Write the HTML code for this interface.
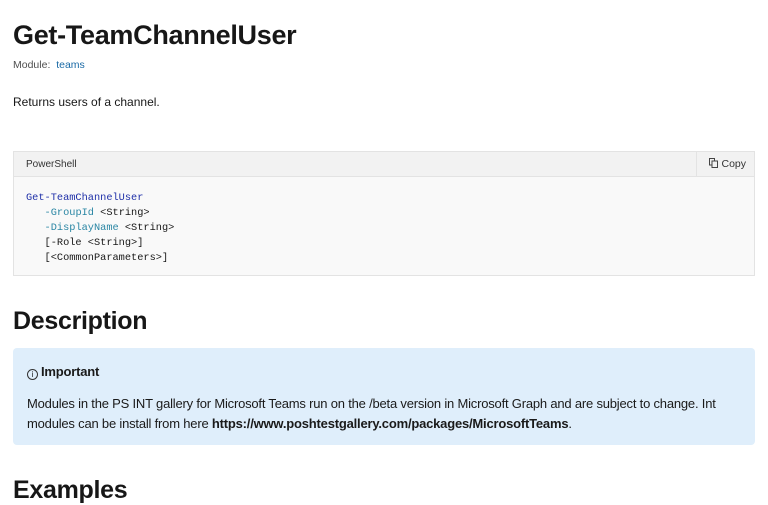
<!DOCTYPE html>
<html><head><meta charset="utf-8"><style>
*{margin:0;padding:0;box-sizing:border-box}
body{width:768px;height:487px;overflow:hidden;background:#fff;font-family:"Liberation Sans",sans-serif;color:#171717;position:relative}
.a{position:absolute;white-space:nowrap}
h1{font-size:27px;font-weight:600;letter-spacing:-0.3px}
.mod{font-size:10.5px;color:#505050}
.mod span{color:#1a6aa6}
.code{position:absolute;left:13px;top:151px;width:742px;height:125px;background:#f9f9f9;border:1px solid #e3e3e3}
.ch{height:25px;background:#f2f2f2;border-bottom:1px solid #e3e3e3;font-size:10px;color:#333;padding:7px 12px;position:relative}
.copy{position:absolute;right:0;top:0;height:24px;border-left:1px solid #e3e3e3;padding:6px 8px 0 12px;font-size:10.5px}
pre{font-family:"Liberation Mono",monospace;font-size:10.3px;line-height:15px;color:#171717;padding:14px 12px}
.k{color:#1e2fa8}.p{color:#2a86a4}
h2{font-size:25px;font-weight:600;letter-spacing:-0.3px}
.note{position:absolute;left:13px;top:348px;width:742px;height:97px;background:#dfeefb;border-radius:4px}
.nt{font-size:13px;line-height:19.5px;color:#1a1a1a;letter-spacing:-0.2px}
</style></head><body>
<h1 class="a" style="left:13px;top:20px">Get-TeamChannelUser</h1>
<div class="a mod" style="left:13px;top:59px">Module:&nbsp; <span>teams</span></div>
<div class="a" style="left:13px;top:95px;font-size:12px">Returns users of a channel.</div>
<div class="code">
<div class="ch">PowerShell<div class="copy"><svg width="9" height="10" viewBox="0 0 9 10" style="vertical-align:-1px;margin-right:3px"><rect x="0.5" y="0.5" width="5" height="6.5" fill="none" stroke="#444"/><rect x="3" y="3" width="5.5" height="6.5" fill="#f2f2f2" stroke="#444"/></svg>Copy</div></div>
<pre><span class="k">Get-TeamChannelUser</span>
   <span class="p">-GroupId</span> &lt;String&gt;
   <span class="p">-DisplayName</span> &lt;String&gt;
   [-Role &lt;String&gt;]
   [&lt;CommonParameters&gt;]</pre>
</div>
<h2 class="a" style="left:13px;top:307px">Description</h2>
<div class="note">
<div class="a nt" style="left:14px;top:14px;font-weight:600"><span style="display:inline-block;width:11px;height:11px;border:1px solid #333;border-radius:50%;font-size:8px;line-height:9px;text-align:center;font-weight:400;vertical-align:-1px;margin-right:3px">i</span>Important</div>
<div class="a nt" style="left:14px;top:46px">Modules in the PS INT gallery for Microsoft Teams run on the /beta version in Microsoft Graph and are subject to change. Int<br>modules can be install from here <b>https://www.poshtestgallery.com/packages/MicrosoftTeams</b>.</div>
</div>
<h2 class="a" style="left:13px;top:476px">Examples</h2>
</body></html>
